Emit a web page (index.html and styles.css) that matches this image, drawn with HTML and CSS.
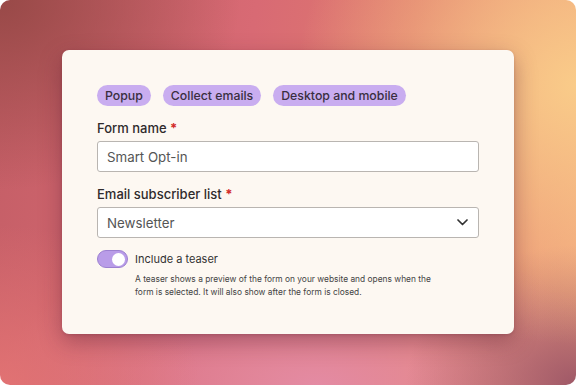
FILE: index.html
```html
<!DOCTYPE html>
<html lang="en">
<head>
<meta charset="utf-8">
<title>Form settings</title>
<link rel="stylesheet" href="styles.css">
</head>
<body>
<div class="canvas">
  <div class="card">
    <div class="tags">
      <span class="tag">Popup</span>
      <span class="tag">Collect emails</span>
      <span class="tag">Desktop and mobile</span>
    </div>
    <div class="field">
      <label class="label">Form name <span class="req">*</span></label>
      <div class="input">Smart Opt-in</div>
    </div>
    <div class="field">
      <label class="label">Email subscriber list <span class="req">*</span></label>
      <div class="input select">
        <span>Newsletter</span>
        <svg class="chev" width="11" height="7" viewBox="0 0 11 7"><path d="M1 1l4.5 4.5L10 1" fill="none" stroke="#333" stroke-width="1.7" stroke-linecap="round" stroke-linejoin="round"/></svg>
      </div>
    </div>
    <div class="toggle-row">
      <span class="toggle"><span class="knob"></span></span>
      <div class="toggle-text">
        <div class="toggle-label">Include a teaser</div>
        <p class="help">A teaser shows a preview of the form on your website and opens when the form is selected. It will also show after the form is closed.</p>
      </div>
    </div>
  </div>
</div>
</body>
</html>
```

FILE: styles.css
```css
html, body { margin: 0; padding: 0; background: #fff; }
body { font-family: Inter, "Noto Sans", sans-serif; }
.canvas {
  width: 576px; height: 385px; box-sizing: border-box;
  border-radius: 10px; overflow: hidden;
  padding: 50px 62px 0 62px;
  background:
    radial-gradient(ellipse 280px 260px at 100% 22%, rgba(250,206,138,0.95), rgba(250,206,138,0) 100%),
    radial-gradient(ellipse 170px 140px at 100% 100%, rgba(150,80,100,0.9), rgba(150,80,100,0) 100%),
    radial-gradient(ellipse 240px 190px at 0% 0%, rgba(150,72,70,0.95), rgba(150,72,70,0) 100%),
    radial-gradient(ellipse 200px 160px at 0% 100%, rgba(228,116,116,0.9), rgba(228,116,116,0) 100%),
    radial-gradient(ellipse 320px 150px at 55% 100%, rgba(228,140,166,0.95), rgba(228,140,166,0) 100%),
    linear-gradient(100deg, #c45e66 0%, #d86a74 40%, #e07a6e 65%, #f2a47c 100%);
}
.card {
  width: 452px; height: 284px; box-sizing: border-box;
  background: #fdf8f2; border-radius: 7px;
  padding: 35px 35px 0 35px;
  box-shadow: 0 8px 22px rgba(90, 30, 50, 0.4), 0 1px 3px rgba(90,30,50,0.2);
}
.tags { display: flex; gap: 12px; }
.tag {
  background: #c9adf0; color: #3a2f40;
  font-size: 12.3px; font-weight: 500; line-height: 21px;
  padding: 0 8px; border-radius: 11px;
}
.field { margin-top: 14px; }
.label { display: block; font-size: 13px; font-weight: 500; color: #2f2a2c; line-height: 16px; margin-bottom: 5px; }
.req { color: #d22a2a; font-weight: 700; }
.input {
  height: 31px; box-sizing: border-box;
  border: 1px solid #b9b5b1; border-radius: 3px; background: #fff;
  padding: 0 9px; font-size: 13.3px; color: #555;
  display: flex; align-items: center;
}
.select { justify-content: space-between; padding-right: 10px; }
.toggle-row { display: flex; gap: 7px; margin-top: 12px; }
.toggle {
  width: 31px; height: 18px; box-sizing: border-box; flex: none;
  background: #b99ce8; border: 1px solid #9c80d0; border-radius: 9px;
  display: flex; justify-content: flex-end; align-items: center; padding-right: 2px;
}
.knob { width: 13px; height: 13px; border-radius: 50%; background: #fff; }
.toggle-label { font-size: 11px; color: #333; line-height: 18px; }
.help { margin: 5px 0 0; font-size: 8.4px; line-height: 12.7px; color: #444; width: 300px; }
```
